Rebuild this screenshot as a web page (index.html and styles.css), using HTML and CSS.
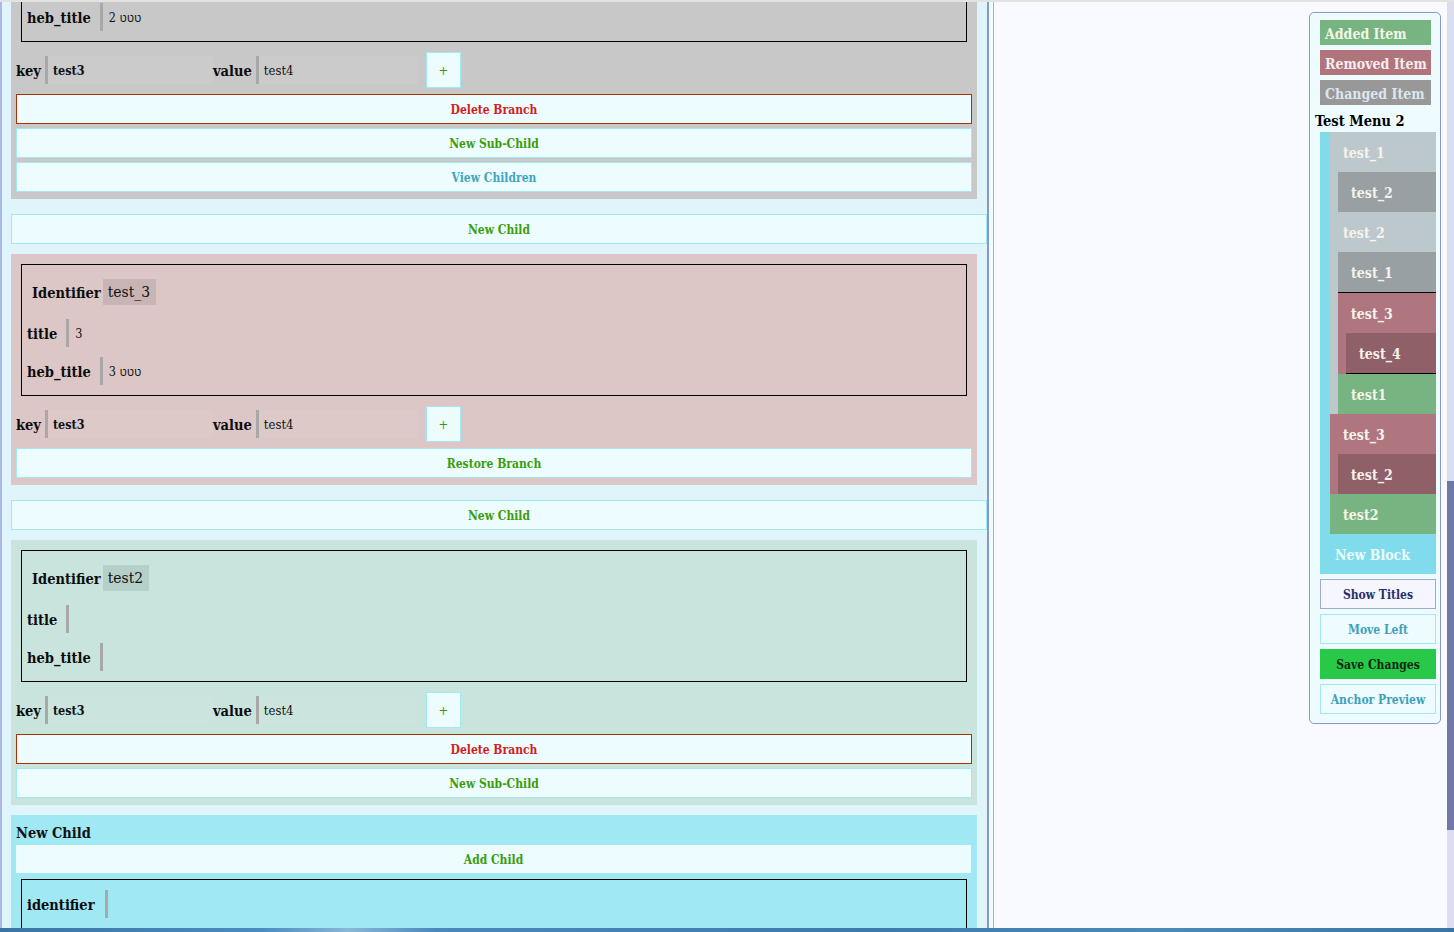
FILE: index.html
```html
<!DOCTYPE html>
<html lang="en">
<head>
<meta charset="utf-8">
<title>Menu Editor</title>
<link rel="stylesheet" href="styles.css">
</head>
<body>
<div class="app">
  <main class="pane">
    <div class="scroll">
      <section class="block changed">
        <div class="record">
          <div class="ident-row"><span class="label">Identifier</span><span class="ident">test_2</span></div>
          <div class="field"><span class="label">title</span><span class="input">2</span></div>
          <div class="field"><span class="label">heb_title</span><span class="input">2 טטט</span></div>
        </div>
        <div class="kv">
          <div class="pair key"><span class="label">key</span><span class="input strong">test3</span></div>
          <div class="pair val"><span class="label">value</span><span class="input">test4</span></div>
          <button class="plus">+</button>
        </div>
        <button class="btn danger">Delete Branch</button>
        <button class="btn">New Sub-Child</button>
        <button class="btn info">View Children</button>
      </section>
      <button class="btn new-child">New Child</button>

      <section class="block removed">
        <div class="record">
          <div class="ident-row"><span class="label">Identifier</span><span class="ident">test_3</span></div>
          <div class="field"><span class="label">title</span><span class="input">3</span></div>
          <div class="field"><span class="label">heb_title</span><span class="input">3 טטט</span></div>
        </div>
        <div class="kv">
          <div class="pair key"><span class="label">key</span><span class="input strong">test3</span></div>
          <div class="pair val"><span class="label">value</span><span class="input">test4</span></div>
          <button class="plus">+</button>
        </div>
        <button class="btn">Restore Branch</button>
      </section>
      <button class="btn new-child">New Child</button>

      <section class="block added">
        <div class="record">
          <div class="ident-row"><span class="label">Identifier</span><span class="ident">test2</span></div>
          <div class="field"><span class="label">title</span><span class="input"></span></div>
          <div class="field"><span class="label">heb_title</span><span class="input"></span></div>
        </div>
        <div class="kv">
          <div class="pair key"><span class="label">key</span><span class="input strong">test3</span></div>
          <div class="pair val"><span class="label">value</span><span class="input">test4</span></div>
          <button class="plus">+</button>
        </div>
        <button class="btn danger">Delete Branch</button>
        <button class="btn">New Sub-Child</button>
      </section>

      <section class="block creating">
        <h3 class="create-title">New Child</h3>
        <button class="btn add">Add Child</button>
        <div class="record">
          <div class="field"><span class="label">identifier</span><span class="input"></span></div>
          <div class="field"><span class="label">title</span><span class="input"></span></div>
        </div>
      </section>
    </div>
  </main>
  <div class="divider"></div>
  <div class="side">
    <aside class="sidebar">
      <div class="legend added">Added Item</div>
      <div class="legend removed">Removed Item</div>
      <div class="legend changed">Changed Item</div>
      <div class="menu-title">Test Menu 2</div>
      <div class="tree">
        <ul class="items">
          <li class="node changed">
            <div class="node-title">test_1</div>
            <ul class="items">
              <li class="node changed dark"><div class="node-title">test_2</div></li>
            </ul>
          </li>
          <li class="node changed">
            <div class="node-title">test_2</div>
            <ul class="items">
              <li class="node changed dark rule"><div class="node-title">test_1</div></li>
              <li class="node removed">
                <div class="node-title">test_3</div>
                <ul class="items">
                  <li class="node removed dark rule"><div class="node-title">test_4</div></li>
                </ul>
              </li>
              <li class="node added"><div class="node-title">test1</div></li>
            </ul>
          </li>
          <li class="node removed">
            <div class="node-title">test_3</div>
            <ul class="items">
              <li class="node removed dark"><div class="node-title">test_2</div></li>
            </ul>
          </li>
          <li class="node added"><div class="node-title">test2</div></li>
        </ul>
        <div class="new-block">New Block</div>
      </div>
      <button class="side-btn titles">Show Titles</button>
      <button class="side-btn plain">Move Left</button>
      <button class="side-btn save">Save Changes</button>
      <button class="side-btn plain">Anchor Preview</button>
    </aside>
    <div class="scrollbar"><div class="thumb"></div></div>
  </div>
</div>
<div class="taskbar"></div>
</body>
</html>
```

FILE: styles.css
```css
* { box-sizing: border-box; }
html, body { margin: 0; padding: 0; }
body {
  width: 1454px;
  height: 932px;
  overflow: hidden;
  background: #f8faff;
  border-top: 2px solid #e2e2e2;
  font-family: "DejaVu Serif Condensed", "DejaVu Serif", serif;
  font-stretch: condensed;
  color: #111;
  display: flex;
  flex-direction: column;
}
button { font-family: inherit; font-stretch: inherit; cursor: pointer; }

.app { display: flex; height: 926px; flex: none; }

/* ---------- main editing pane ---------- */
.pane {
  flex: none;
  width: 989px;
  height: 926px;
  border-left: 2px solid #a8b8e8;
  border-right: 2px solid #8898c8;
  background: #e0f4fc;
  padding-left: 9px;
  overflow: hidden;
}
.scroll { margin-top: -102px; display: flex; flex-direction: column; }

.block {
  width: 966px;
  padding: 10px 5px 7px 5px;
  display: flex;
  flex-direction: column;
}
.block.changed { background: #c8c8c8; }
.block.removed { background: #dcc6c6; margin-top: 10px; }
.block.added { background: #c8e4dc; margin-top: 10px; }
.block.creating { background: #a0e8f4; margin-top: 10px; padding-top: 8px; }

.record {
  margin: 0 5px;
  border: 1px solid #000;
  padding: 14px 5px 10px 5px;
  display: flex;
  flex-direction: column;
}
.label { font-weight: bold; font-size: 14.5px; white-space: nowrap; color: #0c0c0c; }

.ident-row {
  display: flex;
  align-items: center;
  height: 26px;
  padding-left: 5px;
  margin-bottom: 14px;
}
.ident-row .label { margin-right: 2px; }
.ident {
  height: 26px;
  line-height: 26px;
  padding: 0 6px 0 5px;
  font-size: 15.5px;
}
.changed .ident { background: #b6b6b6; }
.removed .ident { background: #c8b4b4; }
.added .ident { background: #b4d0c8; }

.field {
  display: flex;
  align-items: center;
  height: 28px;
}
.field + .field { margin-top: 10px; }
.field .label { padding-right: 9px; }
.input {
  flex: 1;
  height: 28px;
  line-height: 29px;
  border-left: 3px solid #a8a8a8;
  padding-left: 6px;
  font-size: 12.5px;
  font-family: "DejaVu Serif Condensed", "DejaVu Serif", "DejaVu Sans", serif;
}
.creating .record { padding-top: 10px; margin-top: 6px; }
.creating .field .label { padding-right: 10px; }

.kv {
  display: flex;
  align-items: center;
  height: 36px;
  margin-top: 10px;
}
.pair { display: flex; align-items: center; }
.pair.key { width: 197px; }
.pair.val { width: 205px; }
.pair .label { padding-right: 4px; }
.pair .input { font-size: 13px; padding-left: 5px; background: rgba(255, 255, 255, 0.06); }
.pair .input.strong { font-weight: bold; font-size: 12.5px; }
.plus {
  width: 35px;
  height: 36px;
  margin-left: 8px;
  border: 1px solid #a0e8f4;
  background: #ecfcff;
  color: #3a9a0a;
  font-size: 13px;
  padding: 0;
}

.btn {
  height: 30px;
  border: 1px solid #a0e8f4;
  background: #ecfcff;
  color: #3c9c0c;
  font-weight: bold;
  font-size: 12px;
  padding: 2px 0 0 0;
  margin-top: 4px;
  text-align: center;
}
.kv + .btn { margin-top: 6px; }
.btn.danger { border-color: #a83200; color: #d41c1c; }
.btn.info { color: #3ea6bc; }
.btn.new-child { width: 976px; margin-top: 15px; }
.create-title {
  margin: 0;
  font-size: 14.5px;
  line-height: 20px;
  font-weight: bold;
  color: #111;
}
.btn.add { margin: 2px 0 0 0; height: 28px; border-color: #ecfcff; width: 955px; }

/* ---------- divider & side ---------- */
.divider {
  flex: none;
  width: 5px;
  background: #f0fcff;
  border-right: 1px solid #a0b0d0;
}
.side {
  flex: 1;
  display: flex;
  justify-content: flex-end;
  align-items: flex-start;
}
.sidebar {
  width: 132px;
  margin: 10px 6px 0 0;
  border: 1px solid #8898c8;
  border-radius: 5px;
  background: #eefcff;
  padding: 7px 4px 9px 10px;
  display: flex;
  flex-direction: column;
}
.legend {
  width: 111px;
  height: 25px;
  line-height: 28px;
  padding-left: 5px;
  font-weight: bold;
  font-size: 14px;
  white-space: nowrap;
  overflow: hidden;
}
.legend + .legend { margin-top: 5px; }
.legend.added { background: #78b482; color: #f2f6e4; }
.legend.removed { background: #b0747c; color: #f6ecec; }
.legend.changed { background: #989898; color: #dce6ee; }
.menu-title {
  margin-left: -5px;
  height: 27px;
  line-height: 31px;
  font-weight: bold;
  font-size: 14.5px;
  color: #000;
  white-space: nowrap;
}
.tree { background: #80dcec; width: 116px; }
.items { list-style: none; margin: 0; padding: 0; }
.tree > .items { margin-left: 10px; }
.node .items { margin-left: 8px; }
.node-title {
  height: 40px;
  line-height: 42px;
  padding-left: 13px;
  font-weight: bold;
  font-size: 14px;
  color: #f6f4ea;
  white-space: nowrap;
}
.node.changed { background: #bcc8cc; }
.node.changed.dark { background: #98a0a4; }
.node.removed { background: #b07680; }
.node.removed.dark { background: #906068; }
.node.added { background: #78b482; }
.node.rule { border-bottom: 1px solid #000; }
.new-block {
  height: 40px;
  line-height: 42px;
  padding-left: 15px;
  font-weight: bold;
  font-size: 14px;
  color: #eefcff;
}
.side-btn {
  width: 116px;
  height: 30px;
  margin-top: 5px;
  padding: 2px 0 0 0;
  font-weight: bold;
  font-size: 12px;
  border: 1px solid #a0e8f4;
  background: #eefcff;
  color: #40a0b8;
}
.side-btn.titles { border-color: #a0a8d8; background: #f6f6ff; color: #283068; }
.side-btn.save { background: #28c848; border-color: #28c848; color: #102810; }

.scrollbar {
  flex: none;
  width: 7px;
  height: 926px;
  background: #dcdcf0;
  display: flex;
  flex-direction: column;
}
.thumb {
  margin-top: 479px;
  height: 349px;
  background: #7078a8;
}

.taskbar {
  flex: none;
  height: 4px;
  background: linear-gradient(90deg, #3a74a4 0%, #4a8cc0 18%, #8ab8d8 24%, #4a88bc 30%, #3c7aac 60%, #4a8ab8 80%, #3a74a4 100%);
}
```
